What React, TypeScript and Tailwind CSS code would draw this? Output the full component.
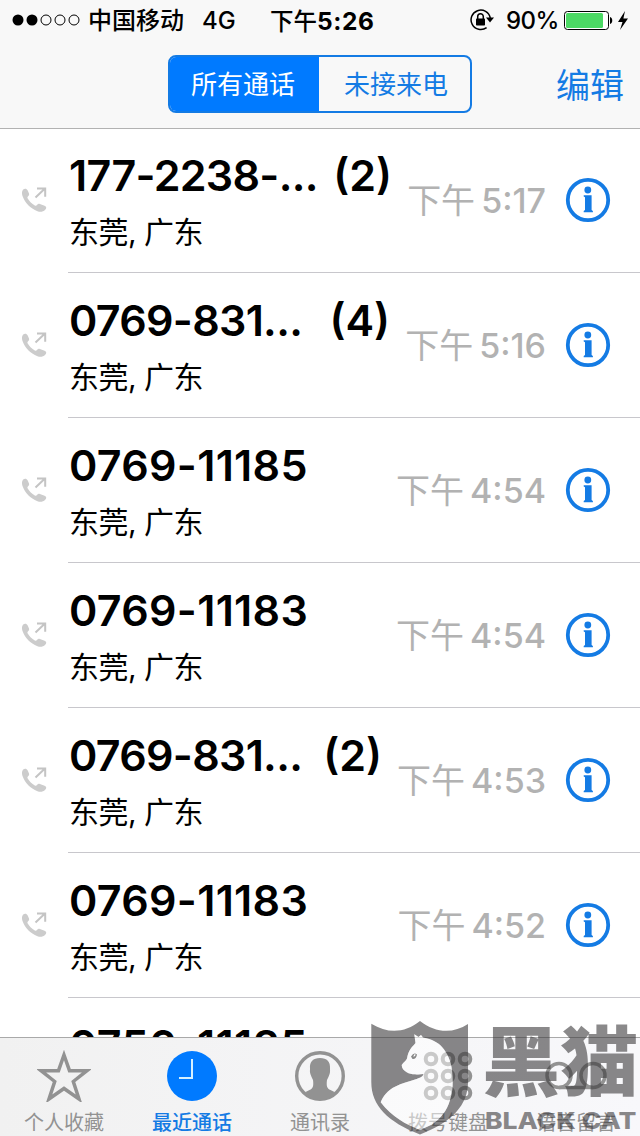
type Call = {
  id: number;
  number: string;
  count?: number;
  place: string;
  time: string;
};

const calls: Call[] = [
  { id: 1, number: "177-2238-...", count: 2, place: "东莞, 广东", time: "5:17" },
  { id: 2, number: "0769-831...", count: 4, place: "东莞, 广东", time: "5:16" },
  { id: 3, number: "0769-11185", place: "东莞, 广东", time: "4:54" },
  { id: 4, number: "0769-11183", place: "东莞, 广东", time: "4:54" },
  { id: 5, number: "0769-831...", count: 2, place: "东莞, 广东", time: "4:53" },
  { id: 6, number: "0769-11183", place: "东莞, 广东", time: "4:52" },
  { id: 7, number: "0756-11185", place: "珠海, 广东", time: "4:50" },
];

const catPath =
  "M44.3 14.3 48.5 17 51 15l2 2.500C62 19 68 22.500 72 27c6 7 8.500 14 9.500 20 2 13 1.500 25-1.500 33-3 11-10 19-18 24.500L50 110C36 104.500 22 97 10.700 82.300 13 76 18 70 25 66.700 32 63 39 61.500 45 59.500c5-1.500 8-3 8.500-5.500-3 .5-5.500.6-8.500.3-3 0-6-.6-8.300-2-3-2-5-4-5-7.300 2-3 4.500-4.500 5.300-6.500.6-3.500 1.500-6.500 3.500-9.500 1.500-2.500 4-4.500 5-6z";

function StatusBar() {
  return (
    <div className="flex h-10 items-center pl-3 text-[23px] font-medium whitespace-nowrap text-black">
      <svg width="69" height="12" viewBox="0 0 69 12" className="shrink-0">
        <circle cx="6" cy="6" r="5.5" />
        <circle cx="20" cy="6" r="5.5" />
        {[34, 48, 62].map((cx) => (
          <circle key={cx} cx={cx} cy="6" r="5" fill="none" stroke="#000" />
        ))}
      </svg>
      <span className="ml-[7px] w-[114px] pt-0.5 text-[24px]">中国移动</span>
      <span className="w-[68px] pt-0.5 text-[24px]">4G</span>
      <span className="w-[200px] pt-0.5 text-[24.5px] font-bold tracking-[0.6px]">
        <span className="text-[23.5px] font-medium tracking-normal">下午</span>5:26
      </span>
      <svg width="25" height="22" viewBox="0 0 25 22" className="shrink-0">
        <path d="M16.6 18.6A9.7 9.7 0 1 1 20.3 9" fill="none" stroke="#000" strokeWidth="1.5" />
        <path d="M16 8.5h8l-4 5z" />
        <rect x="6" y="9.5" width="9" height="7" rx="0.8" />
        <path d="M7.7 10V7.6a2.8 2.8 0 0 1 5.6 0V10" fill="none" stroke="#000" strokeWidth="1.5" />
      </svg>
      <span className="ml-[11px] w-[57px] pt-0.5 text-[24px] tracking-tight">90%</span>
      <svg width="68" height="22" viewBox="0 0 68 22" className="shrink-0">
        <rect x="1.5" y="2.5" width="44" height="18" rx="3" fill="#fff" stroke="#000" />
        <rect x="3" y="4" width="37" height="15" rx="1.5" fill="#4cd964" />
        <path d="M47 8c3 .5 3 6.5 0 7z" />
        <path d="M62 2 55 13h4.5L57 21l8-11.5h-4.6z" />
      </svg>
    </div>
  );
}

function Header() {
  return (
    <header className="relative z-10 h-[129px] shrink-0 border-b border-[#b2b2b2] bg-[#f8f8f8]">
      <StatusBar />
      <div className="grid grid-cols-[168px_304px_1fr] pt-[15px]">
        <div />
        <div className="flex h-[58px] overflow-hidden rounded-lg border-2 border-[#147be4] text-[26px]">
          <button className="w-[149px] bg-[#007aff] pt-px pr-[3px] text-white">所有通话</button>
          <button className="flex-1 pt-px pl-[3px] text-[#147be4]">未接来电</button>
        </div>
        <button className="justify-self-end pt-0.5 pr-4 text-[34px] text-[#147be4]">编辑</button>
      </div>
    </header>
  );
}

function OutgoingIcon() {
  return (
    <svg width="26" height="26" viewBox="0 0 26 26" className="shrink-0">
      <path
        d="M1 2.800C2.600 1.100 4.600 1.400 5.700 3.600L7 6.600c.4 1.200-.1 2-1.100 2.900-.6.500-.6 1.200-.2 2 1.700 3 4.200 5.300 7.100 6.900.9.500 1.600.400 2.200-.4.9-1.100 1.700-1.500 2.900-1l4.700 1.700c2 .9 2.100 2.400.6 4-2.100 2.200-4.900 2.700-7.700 1.500C8.200 21.300 3.200 16 .8 9.800-.3 7-.4 4.500 1 2.800z"
        fill="#ccc"
      />
      <path d="M13.5 10.5 22.7 1.8M15 1.5h8.2v8.2" fill="none" stroke="#c4c4c4" strokeWidth="2" />
    </svg>
  );
}

function InfoIcon() {
  return (
    <svg width="46" height="46" viewBox="0 0 46 46" className="shrink-0">
      <circle cx="23" cy="23" r="20.2" fill="#fff" stroke="#147be4" strokeWidth="3.8" />
      <circle cx="22.8" cy="13" r="3.4" fill="#147be4" />
      <path d="M18.7 18.2h7.9v14.9l1.3.9v1.3h-9.2V34l1.3-.9V20.3l-1.3-.9z" fill="#147be4" />
    </svg>
  );
}

function CallRow({ call }: { call: Call }) {
  return (
    <li className="flex h-[145px] shrink-0">
      <div className="w-[68px] shrink-0 pt-[59px] pl-[22px]">
        <OutgoingIcon />
      </div>
      <div className="flex flex-1 border-b border-[#c8c7cc]">
        <div className="flex-1 pt-[18px] pl-px">
          <div className="flex h-[58px] items-center justify-between text-[43px] font-semibold whitespace-nowrap">
            {call.count ? (
              <>
                <span className="tracking-[-0.7px]">{call.number}</span>
                <span className="pr-[15px]">({call.count})</span>
              </>
            ) : (
              <span className="tracking-[0.3px]">{call.number}</span>
            )}
          </div>
          <p className="text-[30px] leading-[56px] tracking-[-0.5px] whitespace-nowrap">{call.place}</p>
        </div>
        <div className="flex h-[144px] shrink-0 items-center text-[34px] font-medium text-[#b2b2b2]">
          <span className="font-normal">下午</span>
          <span className="ml-1.5">{call.time}</span>
        </div>
        <div className="ml-[19px] flex h-[143px] w-[75px] shrink-0 items-center">
          <InfoIcon />
        </div>
      </div>
    </li>
  );
}

function TabItem({ label, active, children }: { label: string; active?: boolean; children: React.ReactNode }) {
  return (
    <button
      className={
        active
          ? "flex flex-col items-center pt-3 text-[20px] font-medium text-[#147be4]"
          : "flex flex-col items-center pt-3 text-[20px] text-[#929292]"
      }
    >
      {children}
      <span className="mt-[7px] leading-[28px] whitespace-nowrap">{label}</span>
    </button>
  );
}

function TabBar() {
  return (
    <nav className="absolute inset-x-0 bottom-0 grid h-[99px] grid-cols-5 border-t border-[#a9a9a9] bg-linear-to-r from-[#f1f1f1] to-[#f8f8fb]">
      <TabItem label="个人收藏">
        <svg width="54" height="52" viewBox="0 0 54 52">
          <path
            d="m27 5 5.500 15.700H50L36.300 31.500 42 49 27 38.500 12 49l5.700-17.500L4 20.700h17.500z"
            fill="none"
            stroke="#929292"
            strokeWidth="3.5"
          />
        </svg>
      </TabItem>
      <TabItem label="最近通话" active>
        <svg width="52" height="52" viewBox="0 0 52 52">
          <circle cx="26" cy="26" r="25" fill="#007aff" />
          <path d="M26 9v19H13" fill="none" stroke="#d5f0ff" strokeWidth="2" />
        </svg>
      </TabItem>
      <TabItem label="通讯录">
        <svg width="52" height="52" viewBox="0 0 52 52">
          <circle cx="26" cy="26" r="23.3" fill="none" stroke="#929292" strokeWidth="3.4" />
          <path
            d="M26 8c7 0 10.500 4 10 10.500-.1 2 .4 3-.4 5.500-.7 2-1.500 4-2.600 6-.8 6 0 8.500 3.500 10l4 2C36 48 31 50 26 50S16 48 11.500 42l4-2c3.500-1.500 4.300-4 3.500-10-1.100-2-1.900-4-2.600-6-.8-2.500-.3-3.500-.4-5.500C15.500 12 19 8 26 8z"
            fill="#929292"
          />
        </svg>
      </TabItem>
      <TabItem label="拨号键盘">
        <svg width="52" height="52" viewBox="0 0 52 52">
          {[9, 26, 43].map((cy) =>
            [9, 26, 43].map((cx) => (
              <circle key={`${cx}-${cy}`} cx={cx} cy={cy} r="5.3" fill="none" stroke="#929292" strokeWidth="4" />
            )),
          )}
        </svg>
      </TabItem>
      <TabItem label="语音留言">
        <svg width="64" height="52" viewBox="0 0 64 52">
          <circle cx="15" cy="25.5" r="12" fill="none" stroke="#929292" strokeWidth="3.5" />
          <circle cx="49" cy="25.5" r="12" fill="none" stroke="#929292" strokeWidth="3.5" />
          <path d="M15 37.5h34" stroke="#929292" strokeWidth="3.5" />
        </svg>
      </TabItem>
    </nav>
  );
}

function Watermark() {
  return (
    <div className="pointer-events-none absolute right-0 bottom-0 flex h-[116px] w-[270px] text-[#3c3a3c]/60">
      <svg width="100" height="116" viewBox="0 0 100 116" className="shrink-0">
        <path
          d={`M1.300 3.700C18 14 35 13 50 1c15 12 33 13 48 3v58c0 23-16 40-48 52.500C18 102 1.300 86 1.300 62z${catPath}`}
          fill="currentColor"
          fillRule="evenodd"
        />
        <path d={catPath} fill="#fff" fillOpacity="0.5" />
        <path d="M41 36.500q3-5 6-2-1 5-4.500 4.500z" fill="#888" />
        <path d="M43.500 37q0-3 2-3 .5 2-2 3z" fill="#fff" />
      </svg>
      <div className="relative flex-1">
        <span className="absolute top-[-4px] left-[12px] origin-left scale-x-[1.03] text-[76px] leading-[92px] font-black whitespace-nowrap">
          黑猫
        </span>
        <span className="absolute top-[87px] left-[15px] origin-left scale-x-[1.15] text-[23px] leading-[28px] font-extrabold whitespace-nowrap">
          BLACK CAT
        </span>
      </div>
    </div>
  );
}

export default function App() {
  return (
    <div className="relative flex h-[1136px] w-[640px] flex-col overflow-hidden bg-white font-['Inter','Noto_Sans_CJK_SC',sans-serif] text-black">
      <Header />
      <ul className="-mt-px flex flex-col">
        {calls.map((call) => (
          <CallRow key={call.id} call={call} />
        ))}
      </ul>
      <TabBar />
      <Watermark />
    </div>
  );
}
